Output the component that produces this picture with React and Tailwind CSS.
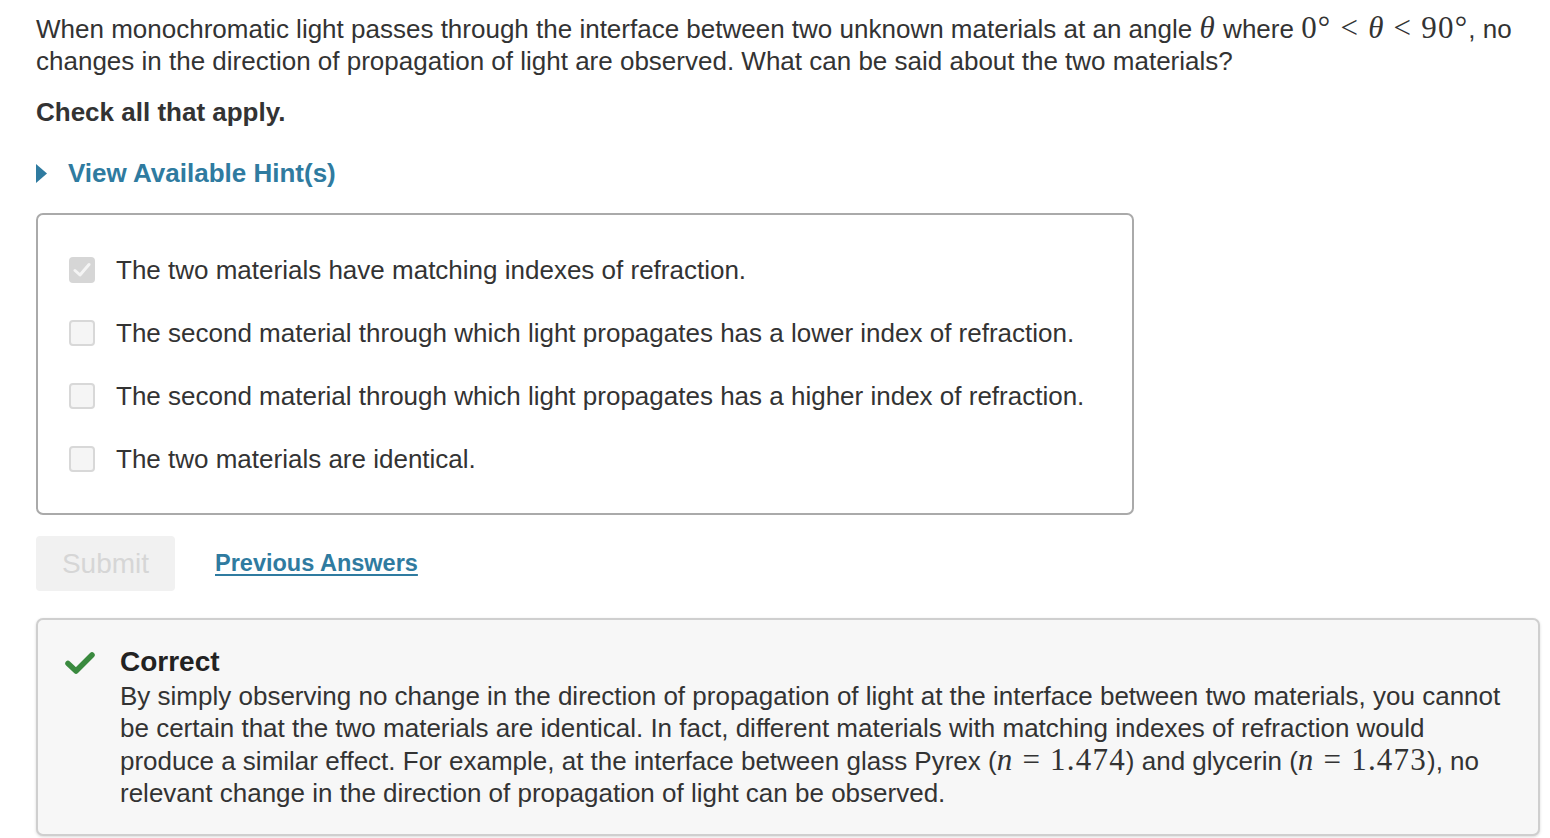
const options = [
  { text: 'The two materials have matching indexes of refraction.', checked: true },
  { text: 'The second material through which light propagates has a lower index of refraction.', checked: false },
  { text: 'The second material through which light propagates has a higher index of refraction.', checked: false },
  { text: 'The two materials are identical.', checked: false },
]

const M = ({ children, italic }) => (
  <span className={`font-['Liberation_Serif','DejaVu_Serif',serif] text-[31px] leading-none tracking-[1.2px] ${italic ? 'italic' : ''}`}>{children}</span>
)

// relation sign with thick spacing on both sides, like typeset math
const R = ({ children }) => <span className="mx-[9px] inline-block">{children}</span>

function Box({ checked }) {
  if (checked) {
    return (
      <span className="flex h-[26px] w-[26px] shrink-0 items-center justify-center rounded-[4px] bg-[#d6d6d6]">
        <svg width="18" height="16" viewBox="0 0 18 16">
          <path d="M2 8.5 L7 13 L16 2.5" fill="none" stroke="#f4f4f4" strokeWidth="3" strokeLinecap="round" strokeLinejoin="round" />
        </svg>
      </span>
    )
  }
  return <span className="h-[26px] w-[26px] shrink-0 rounded-[4px] border-2 border-[#d8d8d8] bg-[#f5f5f5]" />
}

export default function App() {
  return (
    <div className="min-h-screen bg-white pl-[36px] pt-[12px] font-['Liberation_Sans',Arial,sans-serif] text-[26px] text-[#333]">
      <p className="whitespace-nowrap leading-[32px]">
        When monochromatic light passes through the interface between two unknown materials at an angle <M italic>θ</M> where <M>0°</M>
        <M>
          <R>&lt;</R><i>θ</i><R>&lt;</R>90°
        </M>, no
        <br />
        changes in the direction of propagation of light are observed. What can be said about the two materials?
      </p>

      <p className="mt-[19px] font-bold leading-[32px]">Check all that apply.</p>

      <div className="mt-[29px] flex items-center gap-[21px] leading-[32px] text-[#2f7ba0]">
        <svg width="11" height="19" viewBox="0 0 11 19">
          <path d="M0 0 L11 9.5 L0 19 Z" fill="#2f7ba0" />
        </svg>
        <span className="font-bold">View Available Hint(s)</span>
      </div>

      <div className="mt-[24px] w-[1098px] rounded-[7px] border-2 border-[#aaaaaa] px-[31px] py-[23px]">
        {options.map((o) => (
          <div key={o.text} className="flex h-[63px] items-center gap-[21px]">
            <Box checked={o.checked} />
            <span className="leading-[32px]">{o.text}</span>
          </div>
        ))}
      </div>

      <div className="mt-[21px] flex items-center gap-[40px]">
        <button className="h-[55px] w-[139px] rounded-[4px] bg-[#f1f1f1] text-[28px] text-[#d6d6d6]">Submit</button>
        <a className="text-[23.5px] font-bold text-[#2f7ba0] underline decoration-2 underline-offset-[3px]">Previous Answers</a>
      </div>

      <div className="mt-[27px] flex w-[1504px] gap-[25px] rounded-[7px] border-2 border-[#cfcfcf] bg-[#f7f7f7] pb-[25px] pl-[27px] pt-[24px] shadow-[0_1px_3px_rgba(0,0,0,0.15)]">
        <svg className="mt-[7px] shrink-0" width="30" height="24" viewBox="0 0 30 24">
          <path d="M3 12.5 L11 20 L27 4" fill="none" stroke="#3a8a3f" strokeWidth="5.5" strokeLinecap="round" strokeLinejoin="round" />
        </svg>
        <div className="whitespace-nowrap">
          <div className="text-[28px] font-bold leading-[36px] text-[#222]">Correct</div>
          <div className="leading-[32px]">
            By simply observing no change in the direction of propagation of light at the interface between two materials, you cannot
            <br />
            be certain that the two materials are identical. In fact, different materials with matching indexes of refraction would
            <br />
            produce a similar effect. For example, at the interface between glass Pyrex (<M><i>n</i><R>=</R>1.474</M>) and glycerin (<M><i>n</i><R>=</R>1.473</M>), no
            <br />
            relevant change in the direction of propagation of light can be observed.
          </div>
        </div>
      </div>
    </div>
  )
}
